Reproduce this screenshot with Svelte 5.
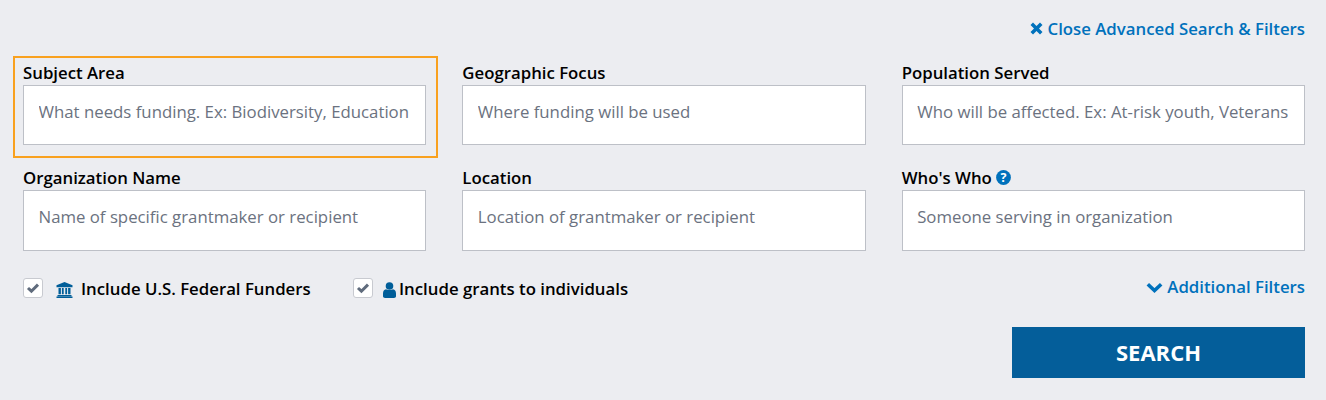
<script>
	const fields = [
		{ label: 'Subject Area', placeholder: 'What needs funding. Ex: Biodiversity, Education', focused: true },
		{ label: 'Geographic Focus', placeholder: 'Where funding will be used' },
		{ label: 'Population Served', placeholder: 'Who will be affected. Ex: At-risk youth, Veterans' },
		{ label: 'Organization Name', placeholder: 'Name of specific grantmaker or recipient' },
		{ label: 'Location', placeholder: 'Location of grantmaker or recipient' },
		{ label: "Who's Who", placeholder: 'Someone serving in organization', help: true }
	];
</script>

<div class="search">
	<div class="top">
		<a href="#close" class="link">
			<svg width="13" height="13" viewBox="0 0 13 13"><path d="M.5 3 3 .5 6.500 4 10 .5 12.500 3 9 6.500 12.500 10 10 12.500 6.500 9 3 12.500 .5 10 4 6.500Z" /></svg>
			Close Advanced Search &amp; Filters
		</a>
	</div>

	<div class="fields">
		{#each fields as f}
			<div class="field" class:focused={f.focused}>
				<label for={f.label}>
					{f.label}
					{#if f.help}
						<svg class="help" width="15" height="15" viewBox="0 0 15 15">
							<circle cx="7.5" cy="7.5" r="7.4" fill="#0071bc" />
							<text x="7.5" y="12" text-anchor="middle">?</text>
						</svg>
					{/if}
				</label>
				<input id={f.label} type="text" placeholder={f.placeholder} />
			</div>
		{/each}
	</div>

	<div class="options">
		<div class="check first">
			<span class="box">
				<svg width="14" height="12" viewBox="0 0 14 12"><path d="M2 6 5.400 9.200 12 2.600" /></svg>
			</span>
			<svg class="bank" width="17" height="16" viewBox="0 0 17 16">
				<path d="M8.500 0 16.500 3.200V5.200H.5V3.200Z" />
				<path d="M2.500 6h2.400v6.300H2.500ZM5.900 6h1.800v6.300H5.900ZM9.300 6h1.800v6.300H9.300ZM12.100 6h2.400v6.300h-2.400ZM1.500 13h14v1.200H1.500ZM.5 14.600h16V16H.5Z" />
			</svg>
			<span>Include U.S. Federal Funders</span>
		</div>
		<div class="check second">
			<span class="box">
				<svg width="14" height="12" viewBox="0 0 14 12"><path d="M2 6 5.400 9.200 12 2.600" /></svg>
			</span>
			<svg class="person" width="13" height="16" viewBox="0 0 13 16">
				<circle cx="6.5" cy="4" r="3.8" />
				<path d="M3 7.2C4 8.2 9 8.2 10 7.2 11.8 7.5 13 9 13 11.5V14.3C13 15.4 12 16 11 16H2C1 16 0 15.4 0 14.3V11.5C0 9 1.2 7.500 3 7.200Z" />
			</svg>
			<span>Include grants to individuals</span>
		</div>
		<a href="#filters" class="link more">
			<svg width="17" height="11" viewBox="0 0 17 11"><path d="M1.800 2.200 8.500 8.500 15.200 2.200" /></svg>
			Additional Filters
		</a>
	</div>

	<div class="actions">
		<button type="button">SEARCH</button>
	</div>
</div>

<style>
	:global(body) {
		background: #ecedf1;
	}
	.search {
		box-sizing: border-box;
		height: 400px;
		padding: 19px 21px 0 23px;
		font-family: 'Open Sans', sans-serif;
		background: #ecedf1;
	}
	.top {
		display: flex;
		justify-content: flex-end;
		height: 43px;
	}
	.link {
		font-size: 16.8px;
		font-weight: 600;
		line-height: 20px;
		color: #0071bc;
		text-decoration: none;
	}
	.link svg {
		fill: #0071bc;
	}
	.fields {
		display: grid;
		grid-template-columns: repeat(3, 1fr);
		column-gap: 36px;
		row-gap: 21.9px;
	}
	.field {
		position: relative;
		display: flex;
		flex-direction: column;
	}
	.field.focused::after {
		content: '';
		position: absolute;
		inset: -6px -12px -13px -10px;
		border: 2px solid #f9a11f;
		pointer-events: none;
	}
	label {
		display: flex;
		align-items: center;
		gap: 4px;
		height: 21px;
		margin-bottom: 2px;
		font-size: 16.8px;
		font-weight: 600;
		color: #000;
	}
	.help text {
		font-size: 12.5px;
		font-weight: 700;
		fill: #fff;
	}
	input {
		box-sizing: border-box;
		width: 100%;
		height: 60.4px;
		padding: 0 14.5px 8px;
		border: 1px solid #bdc0c7;
		border-radius: 0;
		background: #fff;
		font-family: inherit;
		font-size: 16.8px;
		outline: none;
	}
	input::placeholder {
		color: #6b7280;
		opacity: 1;
	}
	.options {
		display: flex;
		align-items: center;
		height: 30px;
		margin-top: 23.3px;
		font-size: 16.8px;
		font-weight: 600;
		color: #000;
	}
	.check {
		display: flex;
		align-items: center;
	}
	.first {
		width: 330px;
	}
	.box {
		display: flex;
		align-items: center;
		justify-content: center;
		box-sizing: border-box;
		width: 20px;
		height: 20px;
		margin-top: -2px;
		border: 1px solid #c8cad0;
		border-radius: 3px;
		background: #fff;
	}
	.box svg {
		fill: none;
		stroke: #5f6b7c;
		stroke-width: 3;
	}
	.bank {
		margin: 2px 8px 0 13px;
		fill: #005e99;
	}
	.person {
		margin: 2px 3px 0 10px;
		fill: #005e99;
	}
	.more {
		margin-left: auto;
		margin-top: -3px;
	}
	.more svg {
		fill: none;
		stroke: #0071bc;
		stroke-width: 3.600;
	}
	.actions {
		display: flex;
		justify-content: flex-end;
		margin-top: 23px;
	}
	button {
		width: 293px;
		height: 51px;
		border: none;
		background: #045e9a;
		color: #fff;
		font-family: inherit;
		font-size: 22px;
		font-weight: 700;
	}
</style>
